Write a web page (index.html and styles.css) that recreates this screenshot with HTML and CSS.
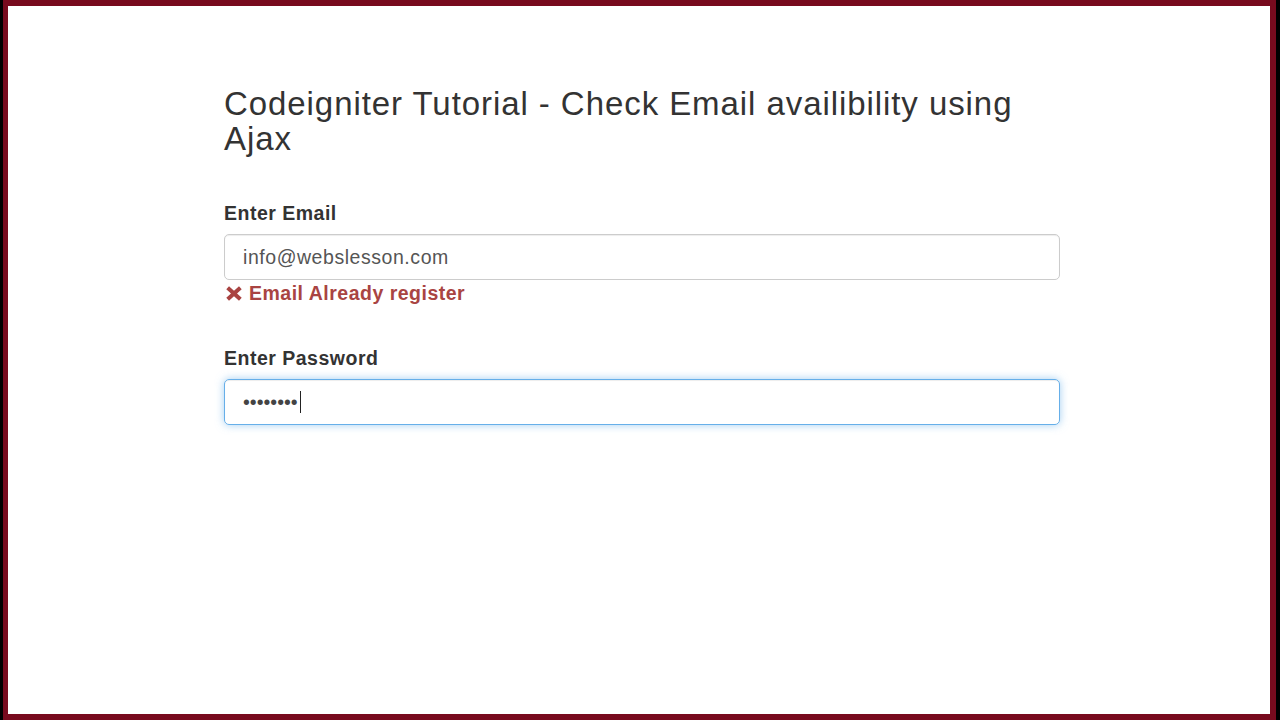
FILE: index.html
```html
<!DOCTYPE html>
<html lang="en">
<head>
    <meta charset="UTF-8">
    <meta name="viewport" content="width=device-width, initial-scale=1.0">
    <title>Check Email availibility</title>
<link rel="stylesheet" href="styles.css">
</head>
<body>
    <div class="frame">
        <div class="container">
            <h3>Codeigniter Tutorial - Check Email availibility using Ajax</h3>
            <div class="form-group">
                <label>Enter Email</label>
                <div class="form-control">info@webslesson.com</div>
                <div class="help-error">
                    <svg class="icon-remove" viewBox="0 0 17 14" width="18" height="15">
                        <path d="M2.5 1.5 L14.5 12.5 M14.5 1.5 L2.5 12.5" stroke="#a94442" stroke-width="3.8" stroke-linecap="butt"/>
                    </svg>
                    <span>Email Already register</span>
                </div>
            </div>
            <div class="form-group">
                <label>Enter Password</label>
                <div class="form-control focus"><span class="dots">••••••••</span><span class="caret"></span></div>
            </div>
        </div>
    </div>
</body>
</html>
```

FILE: styles.css
```css
*{
    padding: 0;
    margin: 0;
    box-sizing: border-box;
}
body{
    height: 720px;
    background: #000;
    padding: 0 4px 0 3px;
    font-family: "Liberation Sans", Arial, sans-serif;
    color: #333;
}
.frame{
    height: 100%;
    background: #fff;
    border: 6px solid #780b1e;
    border-left-width: 5px;
}
.container{
    width: 836px;
    margin-left: 216px;
    padding-top: 80px;
}
h3{
    font-size: 33px;
    letter-spacing: 0.93px;
    line-height: 35px;
    font-weight: 500;
    color: #333;
}
.form-group{
    margin-top: 44px;
}
.form-group + .form-group{
    margin-top: 38px;
}
label{
    display: block;
    font-size: 19.5px;
    letter-spacing: 0.5px;
    font-weight: bold;
    line-height: 27px;
    margin-bottom: 7px;
}
.form-control{
    height: 46px;
    border: 1px solid #ccc;
    border-radius: 5px;
    padding: 0 18px;
    font-size: 19.5px;
    letter-spacing: 0.55px;
    color: #555;
    display: flex;
    align-items: center;
    box-shadow: inset 0 1px 1px rgba(0, 0, 0, .075);
}
.form-control.focus{
    border-color: #66afe9;
    box-shadow: inset 0 1px 1px rgba(0, 0, 0, .075), 0 0 8px rgba(102, 175, 233, .6);
}
.dots{
    letter-spacing: 0;
    color: #444;
}
.caret{
    width: 1px;
    height: 22px;
    background: #222;
    margin-left: 2px;
}
.help-error{
    display: flex;
    align-items: center;
    gap: 6px;
    color: #a94442;
    font-size: 19.5px;
    letter-spacing: 0.5px;
    font-weight: bold;
    line-height: 27px;
    padding-left: 1px;
}
.icon-remove{
    margin-top: -1px;
}
```
